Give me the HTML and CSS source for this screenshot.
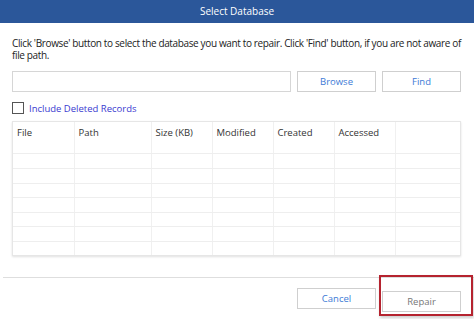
FILE: index.html
```html
<!DOCTYPE html>
<html>
<head>
    <title>Select Database</title>
    <link rel="stylesheet" href="styles.css">
</head>
<body>
    <div class="dialog">
        <div class="title-bar">Select Database</div>

        <div class="content">
            <p class="hint">Click 'Browse' button to select the database you want to repair. Click 'Find' button, if you are not aware of file path.</p>

            <div class="path-row">
                <input type="text" class="path-input">
                <button class="btn">Browse</button>
                <button class="btn">Find</button>
            </div>

            <label class="deleted-option">
                <span class="check-box"></span>
                Include Deleted Records
            </label>

            <div class="file-table">
                <table>
                    <colgroup>
                        <col style="width: 61px">
                        <col style="width: 77px">
                        <col style="width: 61px">
                        <col style="width: 61px">
                        <col style="width: 61px">
                        <col style="width: 61px">
                        <col>
                    </colgroup>
                    <thead>
                        <tr>
                            <th>File</th>
                            <th>Path</th>
                            <th>Size (KB)</th>
                            <th>Modified</th>
                            <th>Created</th>
                            <th>Accessed</th>
                            <th></th>
                        </tr>
                    </thead>
                    <tbody>
                        <tr><td></td><td></td><td></td><td></td><td></td><td></td><td></td></tr>
                        <tr><td></td><td></td><td></td><td></td><td></td><td></td><td></td></tr>
                        <tr><td></td><td></td><td></td><td></td><td></td><td></td><td></td></tr>
                        <tr><td></td><td></td><td></td><td></td><td></td><td></td><td></td></tr>
                        <tr><td></td><td></td><td></td><td></td><td></td><td></td><td></td></tr>
                        <tr><td></td><td></td><td></td><td></td><td></td><td></td><td></td></tr>
                        <tr><td></td><td></td><td></td><td></td><td></td><td></td><td></td></tr>
                    </tbody>
                </table>
            </div>
        </div>

        <div class="footer">
            <button class="btn">Cancel</button>
            <div class="highlighted">
                <button class="btn disabled">Repair</button>
            </div>
        </div>
    </div>
</body>
</html>
```

FILE: styles.css
```css
body {
    margin: 0;
    background-color: #fff;
    font-family: "Open Sans", "Noto Sans", sans-serif;
    color: #222;
}
.dialog {
    width: 474px;
    height: 319px;
    overflow: hidden;
}
.title-bar {
    height: 23px;
    line-height: 23px;
    background-color: #2b579a;
    color: #fff;
    text-align: center;
    font-size: 10px;
}
.content {
    padding: 0 12px 0 12px;
}
.hint {
    margin: 14px 0 0;
    font-size: 10px;
    line-height: 12px;
    letter-spacing: -0.36px;
    color: #222;
}
.path-row {
    display: flex;
    gap: 6px;
    margin-top: 10px;
    height: 21px;
    padding-right: 1px;
}
.path-input {
    flex: 1;
    box-sizing: border-box;
    margin: 0;
    height: 21px;
    border: 1px solid #d6d6d6;
    padding: 0 4px;
}
.btn {
    width: 79px;
    height: 21px;
    box-sizing: border-box;
    margin: 0;
    padding: 0;
    border: 1px solid #cfcfcf;
    background-color: #fff;
    color: #3c7ad6;
    font-family: "Open Sans", "Noto Sans", sans-serif;
    font-size: 9.5px;
}
.btn.disabled {
    color: #777;
}
.deleted-option {
    display: flex;
    align-items: center;
    gap: 5px;
    margin-top: 10px;
    height: 12px;
    font-size: 9.5px;
    color: #3a3ad0;
}
.check-box {
    width: 10px;
    height: 10px;
    border: 1px solid #555;
}
.file-table {
    margin: 7px 1px 0 0;
    border: 1px solid #e6e6e6;
    box-shadow: 0 1px 2px rgba(0,0,0,0.12);
}
.file-table table {
    width: 100%;
    border-collapse: collapse;
    table-layout: fixed;
}
.file-table th {
    height: 31px;
    padding: 4px 4px 0;
    box-sizing: border-box;
    vertical-align: top;
    text-align: left;
    font-weight: normal;
    font-size: 9.5px;
    color: #333;
    border-left: 1px solid #f0f0f0;
    border-bottom: 1px solid #eeeeee;
}
.file-table td {
    height: 13.4px;
    padding: 0;
    border-left: 1px solid #f0f0f0;
    border-bottom: 1px solid #eeeeee;
}
.file-table tbody tr:nth-child(-n+2) td,
.file-table tbody tr:nth-child(4) td {
    height: 14px;
}
.file-table th:first-child,
.file-table td:first-child {
    border-left: none;
}
.file-table tr:last-child td {
    border-bottom: none;
}
.footer {
    margin: 21px 0 0 3px;
    padding: 10px 13px 0 0;
    border-top: 1px solid #dedede;
    display: flex;
    justify-content: flex-end;
    gap: 6px;
}
.highlighted {
    position: relative;
}
.highlighted::after {
    content: "";
    position: absolute;
    left: -3px;
    top: -13px;
    right: -12px;
    bottom: -4px;
    border: 2px solid #b5232f;
    box-shadow: 1px 2px 3px rgba(0,0,0,0.2);
}
```
